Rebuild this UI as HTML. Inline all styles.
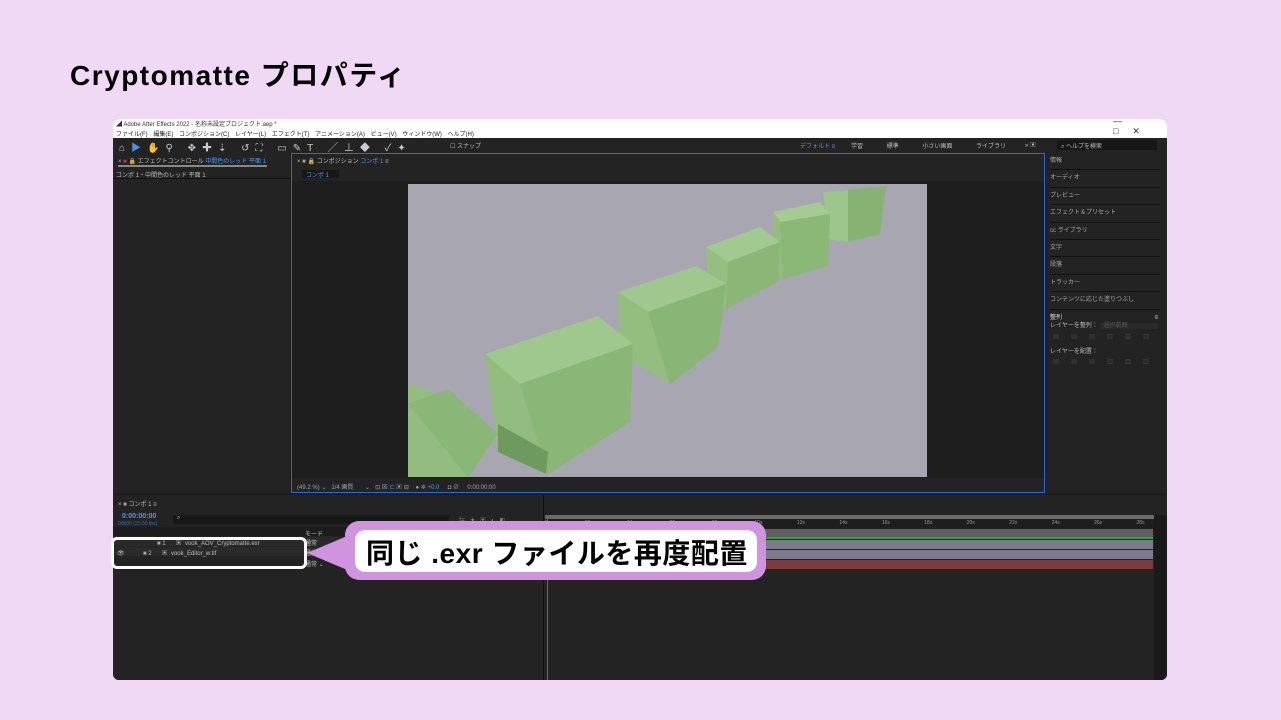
<!DOCTYPE html>
<html><head><meta charset="utf-8"><style>
*{margin:0;padding:0;box-sizing:border-box}
body{width:1281px;height:720px;background:#efd9f5;position:relative;overflow:hidden;font-family:"Liberation Sans","Noto Sans CJK JP",sans-serif}
.a{position:absolute}
.t{font-size:6px;color:#bdbdbd;white-space:nowrap}
.title{left:70px;top:54px;font-size:28px;font-weight:bold;color:#000;letter-spacing:1.5px}
#win{left:113px;top:119px;width:1054px;height:561px;background:#1d1d1d;border-radius:6px;overflow:hidden}
</style></head><body>
<div class="a title">Cryptomatte プロパティ</div>
<div class="a" id="win">
 <div class="a" style="left:0;top:0;width:1054px;height:19px;background:#fff"></div>
 <div class="a" style="left:3px;top:0px;font-size:6px;color:#333">◢ Adobe After Effects 2022 - 名称未設定プロジェクト.aep *</div>
 <div class="a" style="left:1000px;top:-3px;font-size:9px;color:#333;letter-spacing:14px">—□✕</div>
 <div class="a" style="left:3px;top:10px;font-size:6px;color:#222;word-spacing:4px">ファイル(F) 編集(E) コンポジション(C) レイヤー(L) エフェクト(T) アニメーション(A) ビュー(V) ウィンドウ(W) ヘルプ(H)</div>
 <div class="a" style="left:0;top:19px;width:1054px;height:15px;background:#232323"></div>
 <div class="a" style="left:6px;top:20px;font-size:10px;color:#ccc;letter-spacing:6px">⌂<span style="color:#4a90e2">▶</span>✋⚲ ✥✚⇣ ↺⛶ ▭✎T ╱⊥◆ ✓✦</div>
 <div class="a t" style="left:337px;top:22px">☐ スナップ</div>
 <div class="a t" style="left:687px;top:22px;color:#4a9cf5">デフォルト ≡</div>
 <div class="a t" style="left:738px;top:22px;word-spacing:22px">学習 標準 小さい画面 ライブラリ</div>
 <div class="a t" style="left:912px;top:21px">» ▣</div>
 <div class="a" style="left:944px;top:21px;width:100px;height:10px;background:#171717"></div>
 <div class="a t" style="left:948px;top:22px">⌕ ヘルプを検索</div>
 <!-- left panel -->
 <div class="a" style="left:0;top:34px;width:177px;height:340px;background:#232323"></div>
 <div class="a t" style="left:5px;top:37px">× <span style="color:#c33">■</span> 🔒 エフェクトコントロール <span style="color:#4a9cf5">中間色のレッド 平面 1</span></div>
 <div class="a" style="left:5px;top:46px;width:149px;height:2px;background:#888"></div>
 <div class="a t" style="left:3px;top:51px">コンポ 1・中間色のレッド 平面 1</div>
 <div class="a" style="left:0;top:59px;width:177px;height:1px;background:#111"></div>
 <!-- comp panel -->
 <div class="a" style="left:178px;top:34px;width:754px;height:340px;background:#232323;border:1px solid #2d6bd0"></div>
 <div class="a t" style="left:184px;top:37px">× <span style="color:#b8a07a">■</span> 🔒 コンポジション <span style="color:#4a9cf5">コンポ 1</span> ≡</div>
 <div class="a" style="left:189px;top:51px;width:37px;height:8px;background:#171717"></div>
 <div class="a t" style="left:193px;top:51px;color:#4a9cf5">コンポ 1</div>
 <div class="a" style="left:179px;top:62px;width:752px;height:297px;background:#1e1e1e"></div>
 <svg class="a" style="left:295px;top:65px" width="519" height="293" viewBox="0 0 519 293">
  <rect width="519" height="293" fill="#a8a6b0"/>
  <g>
   <polygon points="415,8 478,2 472,50 440,58" fill="#87b274"/><polygon points="415,8 440,6 440,58 420,55" fill="#9cc68a"/>
   <polygon points="365,28 412,18 422,30 372,38" fill="#a4cc92"/><polygon points="365,28 372,38 375,95 365,88" fill="#93bd80"/><polygon points="372,38 422,30 420,82 375,95" fill="#8ab877"/>
   <polygon points="298,63 352,43 372,58 320,78" fill="#a2ca90"/><polygon points="298,63 320,78 318,125 300,112" fill="#95bf82"/><polygon points="320,78 372,58 370,98 318,125" fill="#8bb678"/>
   <polygon points="210,108 288,82 318,100 240,128" fill="#a0c88e"/><polygon points="210,108 240,128 262,200 212,170" fill="#93be80"/><polygon points="240,128 318,100 310,163 262,200" fill="#89b576"/>
   <polygon points="77,170 190,132 225,160 112,200" fill="#9fc88d"/><polygon points="77,170 112,200 140,290 90,265" fill="#92bc7f"/><polygon points="112,200 225,160 222,238 140,290" fill="#8ab677"/>
   <polygon points="90,240 140,268 138,290 90,268" fill="#6f9a5e"/>
   <polygon points="0,200 20,205 90,250 60,293 0,293" fill="#93bd80"/><polygon points="60,293 90,250 40,205 0,220" fill="#8ab677"/>
  </g>
 </svg>
 <div class="a t" style="left:184px;top:363px;color:#9aa">(49.2 %) ⌄ &nbsp; 1/4 画質 &nbsp;&nbsp;&nbsp;&nbsp;&nbsp;&nbsp;⌄ &nbsp;&nbsp;⊡ ⊠ <span style="color:#4a9cf5">⊏</span> ▣ ⊟ &nbsp;&nbsp; ● ✲ <span style="color:#4a9cf5">+0.0</span> &nbsp;&nbsp;&nbsp; ◘ ⊘ &nbsp;&nbsp;&nbsp; 0:00:00:00</div>
 <!-- right panel -->
 <div class="a" style="left:933px;top:34px;width:121px;height:340px;background:#232323"></div>
 <div class="a" style="left:937px;top:34px;width:110px;font-size:6px;color:#aaa;line-height:16.4px">
  <div style="border-bottom:1px solid #111">情報</div><div style="border-bottom:1px solid #111">オーディオ</div><div style="border-bottom:1px solid #111">プレビュー</div><div style="border-bottom:1px solid #111">エフェクト＆プリセット</div><div style="border-bottom:1px solid #111">cc ライブラリ</div><div style="border-bottom:1px solid #111">文字</div><div style="border-bottom:1px solid #111">段落</div><div style="border-bottom:1px solid #111">トラッカー</div><div style="border-bottom:1px solid #111">コンテンツに応じた塗りつぶし</div><div style="color:#ddd">整列 <span style="float:right;margin-right:2px">≡</span></div>
 </div>
 <div class="a t" style="left:937px;top:201px">レイヤーを整列： <span style="background:#2a2a2a;color:#555;padding:0 30px 0 4px">選択範囲</span></div>
 <div class="a t" style="left:940px;top:213px;color:#555;letter-spacing:12px">▤▤▤▥▥▥</div>
 <div class="a t" style="left:937px;top:227px">レイヤーを配置：</div>
 <div class="a t" style="left:940px;top:238px;color:#555;letter-spacing:12px">▤▤▤▥▥▥</div>
 <!-- timeline -->
 <div class="a" style="left:0;top:376px;width:1054px;height:185px;background:#232323"></div>
 <div class="a t" style="left:5px;top:380px">× <span style="color:#b8a07a">■</span> コンポ 1 ≡</div>
 <div class="a" style="left:9px;top:394px;font-size:7px;color:#4a9cf5;font-weight:bold">0:00:00:00</div>
 <div class="a" style="left:5px;top:402px;font-size:5px;color:#3a6ab0">00000 (25.00 fps)</div>
 <div class="a" style="left:60px;top:396px;width:276px;height:9px;background:#171717"></div>
 <div class="a t" style="left:64px;top:396px">⌕</div>
 <div class="a t" style="left:346px;top:396px;letter-spacing:5px;color:#888">⇆✦▣◐◧</div>
 <div class="a" style="left:0;top:408px;width:430px;height:9px;background:#1c1c1c"></div>
 <div class="a t" style="left:192px;top:410px">モード</div>
 <div class="a" style="left:0;top:418px;width:430px;height:9px;background:#2a2a2a"></div>
 <div class="a" style="left:0;top:428px;width:430px;height:9px;background:#2a2a2a"></div>
 <div class="a t" style="left:44px;top:419px"><span style="color:#aab">■</span> 1 &nbsp;&nbsp;&nbsp;&nbsp; ▣ &nbsp;vook_AOV_Cryptomatte.exr</div>
 <div class="a t" style="left:4px;top:429px">👁 &nbsp;&nbsp;&nbsp;&nbsp;&nbsp;&nbsp;&nbsp;&nbsp;&nbsp; <span style="color:#aab">■</span> 2 &nbsp;&nbsp;&nbsp;&nbsp; ▣ &nbsp;vook_Editor_w.tif</div>
 <div class="a t" style="left:192px;top:419px">通常</div><div class="a t" style="left:192px;top:429px">通常</div><div class="a t" style="left:192px;top:440px">通常 ⌄</div>
 <div class="a" style="left:430px;top:376px;width:1px;height:185px;background:#111"></div>
 <div class="a" style="left:432px;top:396px;width:610px;height:4px;background:#6a6a6a"></div>
 <div class="a" style="left:432px;top:400px;width:610px;height:10px;background:#1e1e1e"></div>
 <div class="a t" style="left:432px;top:401px;font-size:5px;color:#999;word-spacing:33px">0s 02s 04s 06s 08s 10s 12s 14s 16s 18s 20s 22s 24s 26s 28s 30s</div>
 <div class="a" style="left:432px;top:410px;width:608px;height:9px;background:#5f5f5f"></div>
 <div class="a" style="left:432px;top:418px;width:608px;height:2px;background:#1fae3a"></div>
 <div class="a" style="left:432px;top:421px;width:608px;height:9px;background:#7c7a8c"></div>
 <div class="a" style="left:432px;top:431px;width:608px;height:9px;background:#7c7a8c"></div>
 <div class="a" style="left:432px;top:441px;width:608px;height:9px;background:#7b3b3b"></div>
 <div class="a" style="left:434px;top:396px;width:1px;height:165px;background:#2a6fd6"></div>
 <div class="a" style="left:1041px;top:396px;width:13px;height:165px;background:#1a1a1a"></div>
</div>
<!-- callouts -->
<div class="a" style="left:111px;top:537px;width:196px;height:32px;border:3px solid #fff;border-radius:6px"></div>
<svg class="a" style="left:300px;top:520px" width="60" height="62"><polygon points="7,33 52,14 52,52" fill="#cf93e0"/></svg>
<div class="a" style="left:345px;top:521px;width:421px;height:59px;background:#cf93e0;border-radius:14px"></div>
<div class="a" style="left:355px;top:530px;width:402px;height:42px;background:#fff;border-radius:10px"></div>
<div class="a" style="left:366px;top:532px;font-size:28px;font-weight:bold;color:#000;white-space:nowrap;letter-spacing:0.5px">同じ .exr ファイルを再度配置</div>
</body></html>
